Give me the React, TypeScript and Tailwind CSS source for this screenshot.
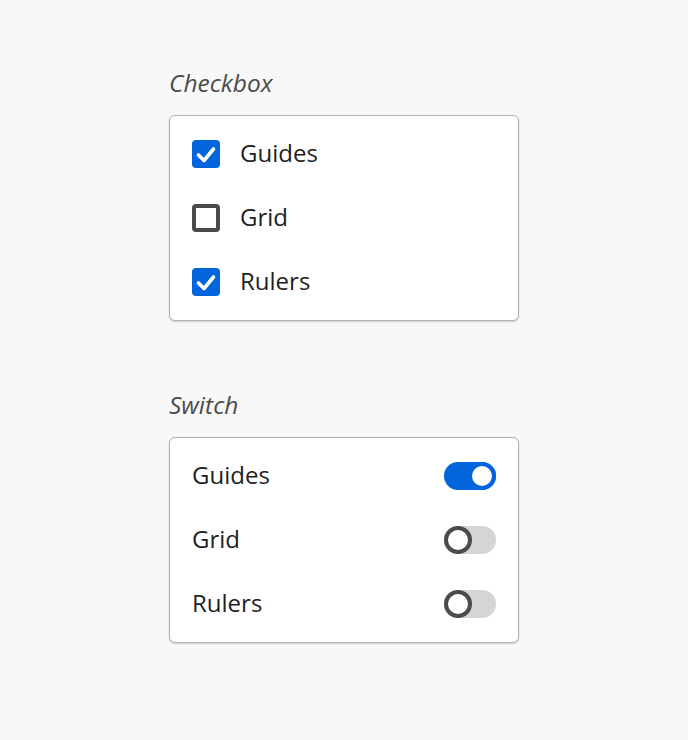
const font = "font-['Open_Sans','Noto_Sans',sans-serif]";

type Item = { label: string; on: boolean };

const items: Item[] = [
  { label: 'Guides', on: true },
  { label: 'Grid', on: false },
  { label: 'Rulers', on: true },
];

const switches: Item[] = [
  { label: 'Guides', on: true },
  { label: 'Grid', on: false },
  { label: 'Rulers', on: false },
];

function CheckBox({ on }: { on: boolean }) {
  if (!on) {
    return <span className="block h-7 w-7 shrink-0 rounded-[4px] border-4 border-[#4b4b4b] bg-white" />;
  }
  return (
    <span className="flex h-7 w-7 shrink-0 items-center justify-center rounded-[4px] bg-[#0265dc]">
      <svg width="28" height="28" viewBox="0 0 28 28" fill="none">
        <path d="M6.5 15l5.5 5.5L21.5 9" stroke="white" strokeWidth="3.6" strokeLinecap="round" strokeLinejoin="round" />
      </svg>
    </span>
  );
}

function Toggle({ on }: { on: boolean }) {
  return (
    <span
      className={`flex h-7 w-[52px] shrink-0 items-center rounded-full ${
        on ? 'justify-end bg-[#0265dc]' : 'justify-start bg-[#d5d5d5]'
      }`}
    >
      <span
        className={`block h-7 w-7 rounded-full border-4 bg-white ${on ? 'border-[#0265dc]' : 'border-[#4b4b4b]'}`}
      />
    </span>
  );
}

function Card({ children }: { children: React.ReactNode }) {
  return (
    <div className="rounded-[6px] border border-[#b1b1b1] bg-white px-[22px] py-[6px] shadow-[0_1px_2px_rgba(0,0,0,0.18)]">
      {children}
    </div>
  );
}

export default function App() {
  return (
    <div className={`min-h-[740px] w-full bg-[#f8f8f8] ${font}`}>
      <div className="mx-auto w-[350px] pt-[67px]">
        <h2 className="mb-4 h-8 text-[24.5px] leading-8 italic font-normal text-[#4b4b4b]">Checkbox</h2>
        <Card>
          {items.map((it) => (
            <div key={it.label} className="flex h-16 items-center gap-5">
              <CheckBox on={it.on} />
              <span className="-mt-[2px] text-[24px] leading-8 text-[#222222]">{it.label}</span>
            </div>
          ))}
        </Card>

        <h2 className="mb-4 mt-[68px] h-8 text-[24.5px] leading-8 italic font-normal text-[#4b4b4b]">Switch</h2>
        <Card>
          {switches.map((it) => (
            <div key={it.label} className="flex h-16 items-center justify-between">
              <span className="-mt-[2px] text-[24px] leading-8 text-[#222222]">{it.label}</span>
              <Toggle on={it.on} />
            </div>
          ))}
        </Card>
      </div>
    </div>
  );
}
